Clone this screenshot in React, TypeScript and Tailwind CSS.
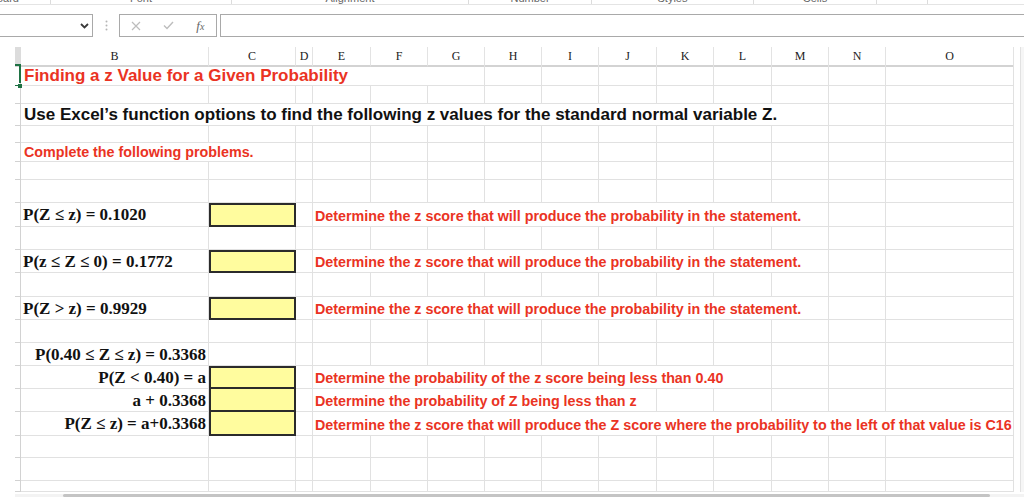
import React from 'react';

const COLS =
  'grid-cols-[6px_188px_87px_17px_58px_57px_57px_57px_57px_58px_57px_58px_57px_57px_128px]';
const LETTERS = ['B', 'C', 'D', 'E', 'F', 'G', 'H', 'I', 'J', 'K', 'L', 'M', 'N', 'O'];

const SPAN: Record<number, string> = {
  1: 'col-span-1',
  2: 'col-span-2',
  6: 'col-span-6',
  8: 'col-span-8',
  9: 'col-span-9',
  11: 'col-span-11',
  12: 'col-span-12',
};

const sans = "font-['Liberation_Sans',Arial,sans-serif]";
const serif = "font-['Liberation_Serif','Times_New_Roman',serif]";

type Cell = {
  span?: number;
  content?: React.ReactNode;
  className?: string;
  bare?: boolean;
};

function Selection() {
  return (
    <>
      <div className="absolute left-0 right-[-1px] top-[-1px] h-[2px] bg-[#1f7244]" />
      <div className="absolute right-[-1px] top-[-1px] bottom-[2px] w-[2px] bg-[#1f7244]" />
      <div className="absolute left-0 bottom-[-1px] w-[4px] h-[1px] bg-[#1f7244]" />
      <div className="absolute right-[-2px] bottom-[-3px] w-[4px] h-[4px] bg-[#1f7244] z-10" />
    </>
  );
}

function Row({ h, cells = [], selected }: { h: string; cells?: Cell[]; selected?: boolean }) {
  const used = cells.reduce((s, c) => s + (c.span ?? 1), 0);
  const all: Cell[] = [...cells, ...Array.from({ length: 14 - used }, () => ({}))];
  return (
    <div className={`grid ${COLS} ${h}`}>
      <div className="relative border-r border-b border-[#d2d2d2]">{selected && <Selection />}</div>
      {all.map((c, i) => (
        <div
          key={i}
          className={`${SPAN[c.span ?? 1]} min-w-0 flex whitespace-nowrap ${
            c.bare ? '' : 'border-r border-b border-[#e1e1e1]'
          } ${c.className ?? 'items-center'}`}
        >
          {c.content}
        </div>
      ))}
    </div>
  );
}

function Label({ children, right }: { children: React.ReactNode; right?: boolean }) {
  return (
    <span
      className={`${serif} font-bold text-[17px] text-[#111] leading-none ${
        right ? 'ml-auto pr-[2px]' : 'pl-[2px]'
      }`}
    >
      {children}
    </span>
  );
}

function Note({ children }: { children: React.ReactNode }) {
  return (
    <span className={`${sans} font-bold text-[14.3px] text-[#ea3323] leading-none pl-[2px] pt-[3px]`}>
      {children}
    </span>
  );
}

function Box({ first = true }: { first?: boolean }) {
  return (
    <div
      className={`w-full h-full bg-[#fffc9e] border-[#2b2b2b] ${
        first ? 'border-2' : 'border-x-2 border-b-2'
      }`}
    />
  );
}

const ribbon = [
  { w: 'w-[51px]', label: 'Clipboard', pos: 'justify-end pr-[31px]' },
  { w: 'w-[181px]', label: 'Font', pos: 'justify-center' },
  { w: 'w-[237px]', label: 'Alignment', pos: 'justify-center' },
  { w: 'w-[123px]', label: 'Number', pos: 'justify-center' },
  { w: 'w-[162px]', label: 'Styles', pos: 'justify-center' },
  { w: 'w-[123px]', label: 'Cells', pos: 'justify-center' },
  { w: 'w-[51px]', label: '', pos: 'justify-center' },
];

const sentence = 'Determine the z score that will produce the probability in the statement.';

export default function App() {
  return (
    <div className="w-[1024px] h-[497px] overflow-hidden bg-white relative">
      {/* ribbon group labels, cut off at the top */}
      <div className="flex h-[5px] overflow-hidden border-b border-[#e4e4e4]">
        {ribbon.map((r, i) => (
          <div key={i} className={`${r.w} flex ${r.pos} border-r border-[#dcdcdc] shrink-0`}>
            <span className={`${sans} text-[11px] leading-[11px] -mt-[7px] text-[#666]`}>{r.label}</span>
          </div>
        ))}
        <div className="flex-1" />
      </div>

      {/* formula bar */}
      <div className="flex h-[23px] mt-[9px]">
        <div className="w-[93px] shrink-0 border border-l-0 border-[#a9a9a9] flex items-center justify-end pr-[3px]">
          <svg width="9" height="6" viewBox="0 0 9 6">
            <path d="M1 1 L4.5 4.5 L8 1" fill="none" stroke="#3a3a3a" strokeWidth="1.8" />
          </svg>
        </div>
        <div className="w-[26px] shrink-0 flex items-center justify-center">
          <svg width="3" height="11" viewBox="0 0 3 11">
            <circle cx="1.5" cy="1.5" r="1" fill="#b5b5b5" />
            <circle cx="1.5" cy="5.5" r="1" fill="#b5b5b5" />
            <circle cx="1.5" cy="9.5" r="1" fill="#b5b5b5" />
          </svg>
        </div>
        <div className="w-[98px] shrink-0 border border-[#a9a9a9] flex items-center">
          <div className="w-[33px] flex justify-center">
            <svg width="10" height="10" viewBox="0 0 10 10">
              <path d="M1 1 L9 9 M9 1 L1 9" stroke="#bdbdbd" strokeWidth="1.2" />
            </svg>
          </div>
          <div className="w-[33px] flex justify-center">
            <svg width="11" height="9" viewBox="0 0 11 9">
              <path d="M1 4.5 L4 7.5 L10 1" fill="none" stroke="#bdbdbd" strokeWidth="1.4" />
            </svg>
          </div>
          <div className="w-[32px] flex justify-center">
            <span className={`${serif} italic text-[13px] text-[#666] leading-none`}>
              f<span className="text-[10px]">x</span>
            </span>
          </div>
        </div>
        <div className="ml-[3px] flex-1 border border-r-0 border-[#a9a9a9]" />
      </div>

      {/* sheet */}
      <div className="flex mt-[10px]">
        <div className="w-[15px] shrink-0" />
        <div className="w-[999px] shrink-0">
          <div className={`grid ${COLS} h-[18px]`}>
            <div className="bg-[#dcdcdc] border-b-2 border-[#d3d3d3]" />
            {LETTERS.map((l) => (
              <div
                key={l}
                className={`${serif} text-[12px] text-[#222] flex items-center justify-center border-r border-b-2 border-r-[#e3e3e3] border-b-[#d3d3d3]`}
              >
                {l}
              </div>
            ))}
          </div>

          <Row
            h="h-[21px]"
            selected
            cells={[
              {
                span: 6,
                content: (
                  <span className={`${sans} font-bold text-[17px] text-[#ea3323] leading-none pl-[3px]`}>
                    Finding a z Value for a Given Probability
                  </span>
                ),
              },
            ]}
          />
          <Row h="h-[18px]" />
          <Row
            h="h-[22px]"
            cells={[
              {
                span: 12,
                content: (
                  <span className={`${sans} font-bold text-[17px] text-[#111] leading-none pl-[3px]`}>
                    Use Excel’s function options to find the following z values for the standard normal variable Z.
                  </span>
                ),
              },
            ]}
          />
          <Row h="h-[17px]" />
          <Row
            h="h-[19px]"
            cells={[
              {
                span: 2,
                content: (
                  <span className={`${sans} font-bold text-[14.3px] text-[#ea3323] leading-none pl-[3px]`}>
                    Complete the following problems.
                  </span>
                ),
              },
            ]}
          />
          <Row h="h-[18px]" />
          <Row h="h-[23px]" />
          <Row
            h="h-[24px]"
            cells={[
              { content: <Label>P(Z ≤ z) = 0.1020</Label> },
              { bare: true, className: 'items-stretch', content: <Box /> },
              {},
              { span: 9, content: <Note>{sentence}</Note> },
            ]}
          />
          <Row h="h-[23px]" />
          <Row
            h="h-[23px]"
            cells={[
              { content: <Label>P(z ≤ Z ≤ 0) = 0.1772</Label> },
              { bare: true, className: 'items-stretch', content: <Box /> },
              {},
              { span: 9, content: <Note>{sentence}</Note> },
            ]}
          />
          <Row h="h-[24px]" />
          <Row
            h="h-[23px]"
            cells={[
              { content: <Label>P(Z &gt; z) = 0.9929</Label> },
              { bare: true, className: 'items-stretch', content: <Box /> },
              {},
              { span: 9, content: <Note>{sentence}</Note> },
            ]}
          />
          <Row h="h-[23px]" />
          <Row h="h-[23px]" cells={[{ content: <Label right>P(0.40 ≤ Z ≤ z) = 0.3368</Label> }]} />
          <Row
            h="h-[23px]"
            cells={[
              { content: <Label right>P(Z &lt; 0.40) = a</Label> },
              { bare: true, className: 'items-stretch', content: <Box /> },
              {},
              { span: 8, content: <Note>Determine the probability of the z score being less than 0.40</Note> },
            ]}
          />
          <Row
            h="h-[23px]"
            cells={[
              { content: <Label right>a + 0.3368</Label> },
              { bare: true, className: 'items-stretch', content: <Box first={false} /> },
              {},
              { span: 6, content: <Note>Determine the probability of Z being less than z</Note> },
            ]}
          />
          <Row
            h="h-[24px]"
            cells={[
              { content: <Label right>P(Z ≤ z) = a+0.3368</Label> },
              { bare: true, className: 'items-stretch', content: <Box first={false} /> },
              {},
              {
                span: 11,
                content: (
                  <Note>
                    Determine the z score that will produce the Z score where the probability to the left of that value is C16
                  </Note>
                ),
              },
            ]}
          />
          <Row h="h-[22px]" />
          <Row h="h-[23px]" />
          <Row h="h-[11px]" />
        </div>
        <div className="w-[6px] shrink-0" />
        <div className="w-[4px] shrink-0 border-l border-[#e2e2e2] bg-[#f6f6f6]" />
      </div>

      {/* horizontal scrollbar */}
      <div className="ml-[15px] h-[5px] bg-[#f3f3f3]">
        <div className="ml-[48px] w-[927px] h-[3px] mt-[2px] rounded-full bg-[#c4c4c4]" />
      </div>
    </div>
  );
}
